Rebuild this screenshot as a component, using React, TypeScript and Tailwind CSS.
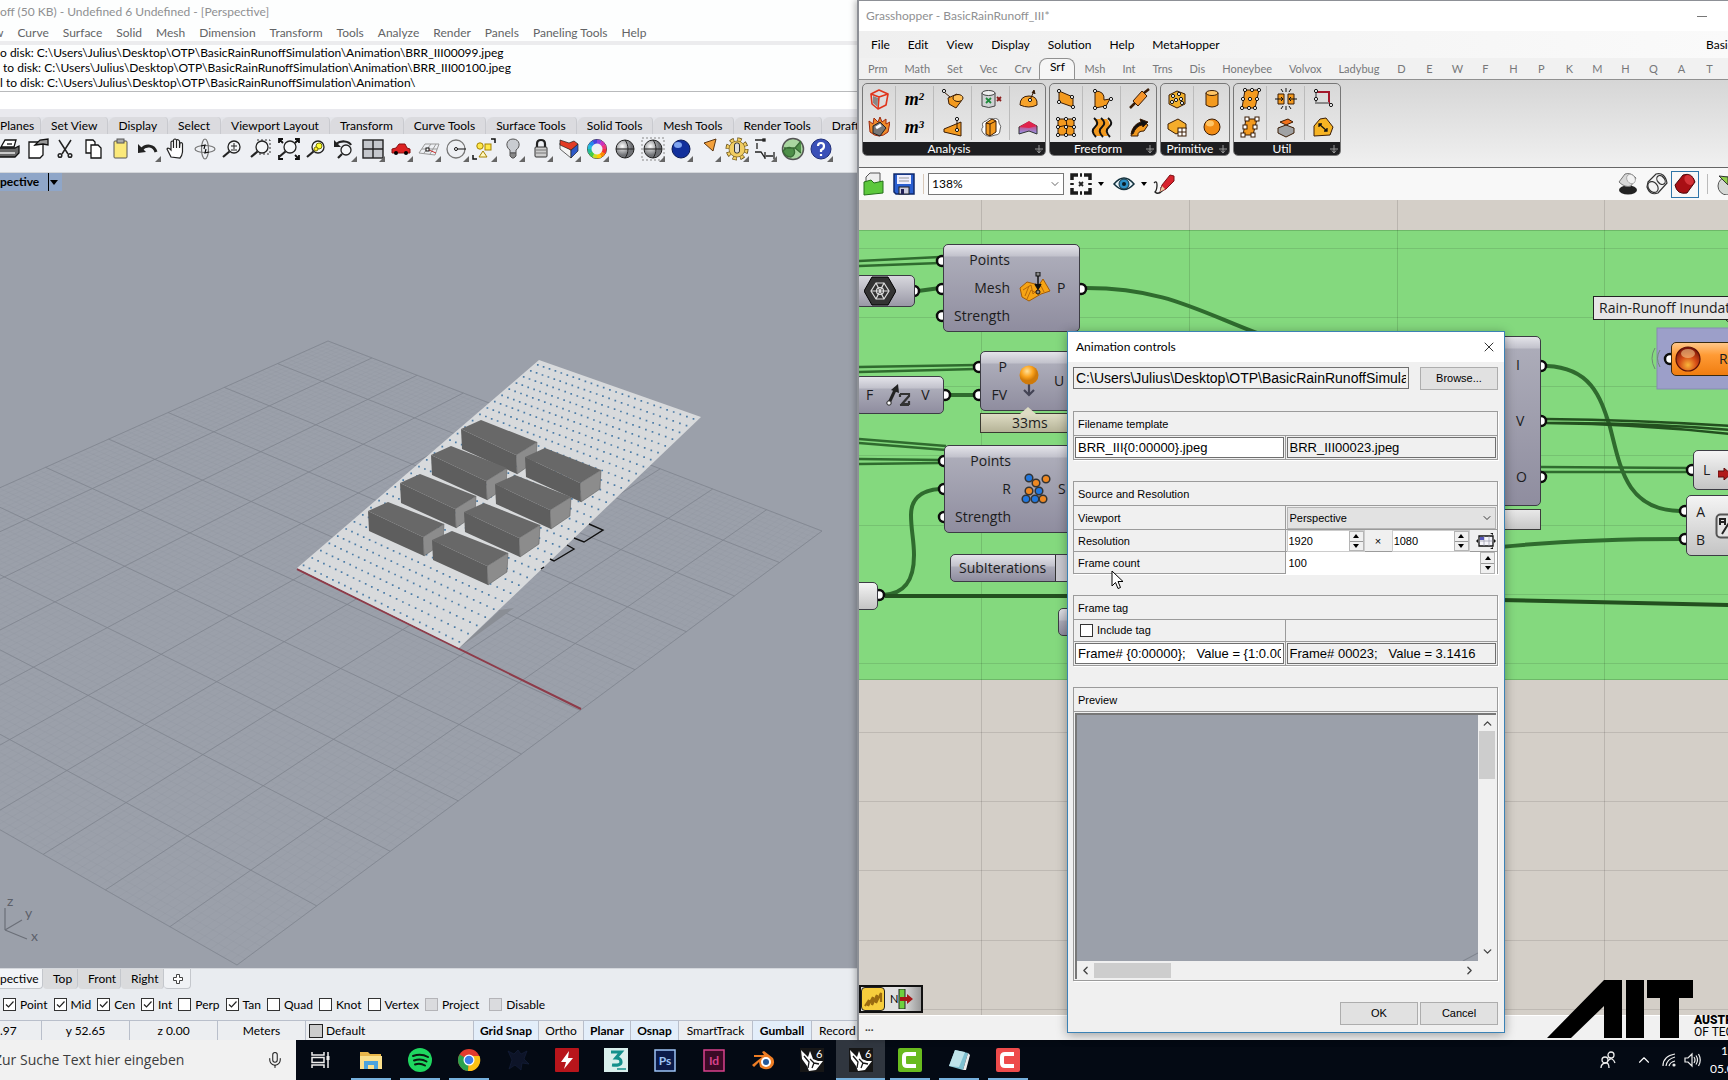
import type { ReactNode } from "react";
import { Mic, ChevronUp, ChevronDown, ChevronLeft, ChevronRight, X } from "lucide-react";

/* ---------- perspective helpers for the 3D viewport ---------- */

type Pt = [number, number];

/** Maps the unit square onto the quad a(0,0) b(1,0) c(1,1) d(0,1). */
function quadMap(a: Pt, b: Pt, c: Pt, d: Pt) {
  const dx1 = b[0] - c[0], dx2 = d[0] - c[0], sx = a[0] - b[0] + c[0] - d[0];
  const dy1 = b[1] - c[1], dy2 = d[1] - c[1], sy = a[1] - b[1] + c[1] - d[1];
  const det = dx1 * dy2 - dx2 * dy1;
  const g = (sx * dy2 - dx2 * sy) / det;
  const h = (dx1 * sy - sx * dy1) / det;
  return (u: number, v: number): Pt => {
    const w = g * u + h * v + 1;
    return [
      ((b[0] - a[0] + g * b[0]) * u + (d[0] - a[0] + h * d[0]) * v + a[0]) / w,
      ((b[1] - a[1] + g * b[1]) * u + (d[1] - a[1] + h * d[1]) * v + a[1]) / w,
    ];
  };
}

const ground = quadMap([328, 168], [822, 358], [237, 792], [-336, 465]);
const slab = quadMap([539, 188], [701, 244], [459, 475], [297, 395]);

function gridPath(n: number) {
  let d = "";
  for (let i = 0; i <= n; i++) {
    const t = i / n;
    for (const [p, q] of [[ground(t, 0), ground(t, 1)], [ground(0, t), ground(1, t)]]) {
      d += `M${p[0].toFixed(1)} ${p[1].toFixed(1)}L${q[0].toFixed(1)} ${q[1].toFixed(1)}`;
    }
  }
  return d;
}

function dotPath() {
  let d = "";
  for (let i = 0; i < 26; i++)
    for (let j = 0; j < 31; j++) {
      const [x, y] = slab((i + 0.4) / 26, (j + 0.5) / 31);
      d += `M${x.toFixed(1)} ${y.toFixed(1)}h0`;
    }
  return d;
}

const BOXES: Pt[] = [
  [461, 256], [525, 284], [431, 282], [495, 311], [400, 310], [464, 339], [368, 338], [432, 367],
];

function Scene() {
  return (
    <svg className="absolute inset-0 h-full w-full" aria-label="Perspective view of the terrain model">
      <path d={gridPath(100)} stroke="#8b909a" strokeOpacity=".28" strokeWidth=".7" fill="none" />
      <path d={gridPath(10)} stroke="#7f848e" strokeOpacity=".8" strokeWidth="1" fill="none" />
      <path d="M297 396L581 536" stroke="#8e3b49" strokeWidth="2" />
      <path d="M459 475L500 437L514 435Z" fill="#8a8e95" />
      <path d="M539 187L701 244L459 475L297 395Z" fill="#d8dadc" />
      <path d={dotPath()} stroke="#4c7ca6" strokeWidth="1.700" strokeLinecap="square" fill="none" />
      <path d="M589 351L603 357L584 369L574 365M567 372L574 376L554 388L550 386M544 394L541 396" stroke="#111" strokeWidth="1.4" fill="none" />
      {BOXES.map(([x, y], i) => (
        <g key={i} transform={`translate(${x} ${y})`}>
          <path d="M0 0L20 -9L76 13L55 26Z" fill="#686868" />
          <path d="M0 0L55 26L56 45L1 20Z" fill="#5e5e5e" />
          <path d="M55 26L76 13L75 32L56 45Z" fill="#8c8c8c" stroke="#555" strokeWidth=".5" />
        </g>
      ))}
      <g stroke="#6b6f78" strokeWidth="1.2" fill="none">
        <path d="M5 757V735M5 757L22 747M5 757L27 766" />
      </g>
      <g fill="#5d616a" fontFamily="Lato, sans-serif" fontSize="14">
        <text x="7" y="733">z</text>
        <text x="25" y="745">y</text>
        <text x="31" y="768">x</text>
      </g>
    </svg>
  );
}

/* ---------- Rhino toolbar ---------- */

const HUES = ["#e33", "#f80", "#fc0", "#cd2", "#4c4", "#2b9", "#2bd", "#28e", "#44d", "#84d", "#c3b", "#e37"];

function ringSegment(i: number) {
  const a = (i * Math.PI) / 6, b = a + Math.PI / 6 + 0.03;
  const p = (t: number) => `${(14 + 7.5 * Math.cos(t)).toFixed(2)} ${(14 + 7.5 * Math.sin(t)).toFixed(2)}`;
  return `M${p(a)}A7.5 7.5 0 0 1 ${p(b)}`;
}

const lens = <><circle cx="15" cy="12" r="6" fill="#f4f6f8" stroke="#222" strokeWidth="1.3" /><path d="M10.500 16.500L4 22" stroke="#222" strokeWidth="2.200" /></>;
const globe = <><circle cx="14" cy="14" r="9" fill="url(#ball)" stroke="#222" /><path d="M5 14H23M14 5C18 10 18 18 14 23" stroke="#222" fill="none" /></>;

const RHINO_TOOLS: { name: string; fly?: boolean; art: ReactNode }[] = [
  { name: "Print", art: <g stroke="#111" strokeWidth="1.3"><path d="M6 12L10 5H21L19 12Z" fill="#fff" /><path d="M3 13H20L24 11V18L20 22H3Z" fill="#666" /><path d="M4 18H20" stroke="#fff" /><path d="M12 9h5" /></g> },
  { name: "Document properties", art: <g stroke="#111" strokeWidth="1.3"><path d="M6 7H20V20L17 23H6Z" fill="#fff" /><path d="M12 10L17 5L25 4V10L20 9Z" fill="#999" /></g> },
  { name: "Cut", art: <g stroke="#222" strokeWidth="1.5" fill="none"><path d="M8 5L17 19M20 5L11 19" /><circle cx="9" cy="20.500" r="1.800" /><circle cx="19" cy="20.500" r="1.800" /></g> },
  { name: "Copy", art: <g stroke="#111" strokeWidth="1.3" fill="#fff"><path d="M7 5H14L16 7V18H7Z" /><path d="M12 10H19L22 13V23H12Z" /></g> },
  { name: "Paste", art: <g stroke="#555"><rect x="7" y="6" width="13" height="17" rx="1" fill="#fbe97a" /><rect x="10" y="4" width="7" height="4" fill="#aaa" /></g> },
  { name: "Undo", fly: true, art: <><path d="M6 15C11 9 19 10 21 17" stroke="#222" strokeWidth="3" fill="none" /><path d="M3 9V18L11 17Z" fill="#222" /></> },
  { name: "Pan", art: <path d="M8 22L4 14Q5 12 8 15V7Q9.500 5 10.500 7V13V5Q12 3 13.500 5V13V5Q15 4 16.500 6V13L17 8Q19 7 19.500 9V17Q19 21 17 23Z" fill="#fff" stroke="#222" strokeWidth="1.200" /> },
  { name: "Rotate view", art: <g stroke="#777" strokeWidth="1.200" fill="none"><ellipse cx="14" cy="14" rx="10" ry="3.500" /><ellipse cx="14" cy="14" rx="3.500" ry="10" /><path d="M10 11L14 10L13 14M18 17L14 18L15 14" stroke="#111" /></g> },
  { name: "Zoom dynamic", art: <>{lens}<path d="M12 11H18M15 8V14M12 15h6" stroke="#222" /></> },
  { name: "Zoom window", art: <><path d="M10 5H23V19H10" stroke="#333" strokeDasharray="2 2" fill="none" />{lens}</> },
  { name: "Zoom extents", art: <><path d="M4 8V4H8M4 4L8 8M20 4H24V8M24 4L20 8M24 20V24H20M24 24L20 20M8 24H4V20" stroke="#111" strokeWidth="1.800" fill="none" />{lens}</> },
  { name: "Zoom selected", art: <>{lens}<circle cx="16" cy="11" r="3" fill="#ff3" stroke="#770" /><circle cx="13" cy="14" r="2" fill="#fe3" stroke="#770" /></> },
  { name: "Undo view change", fly: true, art: <><circle cx="15" cy="15" r="5" fill="#f4f6f8" stroke="#222" strokeWidth="1.300" /><path d="M11 19L7 23M5 9C10 5 18 6 20 10" stroke="#222" strokeWidth="2.200" fill="none" /><path d="M3 5V12H10Z" fill="#222" /></> },
  { name: "4 viewports", fly: true, art: <g stroke="#222" strokeWidth="1.400" fill="#c4c7cc"><rect x="4" y="5" width="20" height="18" /><path d="M14 5V23M4 14H24" /></g> },
  { name: "Named views", fly: true, art: <><path d="M5 14L9 13L12 9H18L20 13L23 14V18H5Z" fill="#d22" stroke="#811" /><circle cx="9" cy="18" r="2" /><circle cx="19" cy="18" r="2" /></> },
  { name: "Set CPlane", fly: true, art: <g stroke="#999" fill="none"><path d="M4 18L10 9H24L20 20ZM7 14H22M9 18L16 9M15 19L21 9" /><path d="M14 15L21 18" stroke="#c33" /><rect x="11" y="13" width="3" height="3" stroke="#111" fill="#fff" /></g> },
  { name: "Object snap", fly: true, art: <g stroke="#777" fill="none"><circle cx="13" cy="14" r="9" strokeWidth="1.300" /><path d="M13 14H23" stroke="#111" /><circle cx="13" cy="14" r="1.500" fill="#fff" stroke="#111" /></g> },
  { name: "Select objects", fly: true, art: <g stroke="#a58200" fill="#ffe84a"><circle cx="9" cy="11" r="3.200" /><rect x="14" y="9" width="6" height="6" /><path d="M8 22L12 16L16 22Z" fill="#fff7c0" /><path d="M20 4H24V8M2 20V24H6" stroke="#111" fill="none" strokeWidth="1.500" /></g> },
  { name: "Hide objects", fly: true, art: <g stroke="#555"><path d="M14 4C7 4 6 12 11 15V18H17V15C22 12 21 4 14 4Z" fill="#c9ccd1" /><path d="M11 18H17V21L15 23H13L11 21Z" fill="#888" /></g> },
  { name: "Lock objects", fly: true, art: <><path d="M10 13V9Q10 5 14 5T18 9V13" stroke="#222" strokeWidth="2.200" fill="none" /><rect x="8" y="12" width="12" height="10" rx="1" fill="#ccc" stroke="#333" /><path d="M9 15H19M9 18H19" stroke="#777" /></> },
  { name: "Layers", fly: true, art: <g stroke="#222" strokeWidth=".7"><path d="M5 8V14L16 23V15Z" fill="#f4f4f4" /><path d="M16 15L23 9V16L16 23Z" fill="#2c58c8" /><path d="M5 5L14 8L19 6L23 9L16 15L5 10Z" fill="#e23b25" /></g> },
  { name: "Object properties", fly: true, art: <g fill="none" strokeWidth="4"><circle cx="14" cy="14" r="9.500" stroke="#333" strokeWidth="1" />{HUES.map((c, i) => <path key={c} d={ringSegment(i)} stroke={c} />)}</g> },
  { name: "Shade", art: globe },
  { name: "Shade selected", fly: true, art: <><rect x="3" y="3" width="22" height="22" fill="none" stroke="#888" strokeDasharray="2 2" />{globe}</> },
  { name: "Render", fly: true, art: <><circle cx="14" cy="14" r="9" fill="#12309c" stroke="#0a1a55" /><ellipse cx="11" cy="10" rx="4" ry="3" fill="#7fa4f0" /></> },
  { name: "Spotlight", fly: true, art: <path d="M9 8L21 4L18 16Z" fill="#f3a13c" stroke="#5b3510" /> },
  { name: "Options", fly: true, art: <><circle cx="14" cy="14" r="9" fill="none" stroke="#5d4710" strokeWidth="5" strokeDasharray="4 3.070" /><circle cx="14" cy="14" r="9" fill="none" stroke="#f1cd62" strokeWidth="3.500" strokeDasharray="3 4.070" strokeDashoffset="-.5" /><circle cx="14" cy="14" r="8" fill="#f1cd62" stroke="#5d4710" strokeWidth=".6" /><rect x="11.500" y="8" width="5" height="10" rx="2" fill="#ddd" stroke="#333" /></> },
  { name: "Dimension", fly: true, art: <g stroke="#222" strokeWidth="1.300" fill="none"><path d="M4 5H14M6 8V14M4 17H10L14 23M14 17V24M23 17V24M15 21H22" /><rect x="12" y="4" width="2" height="2" /></g> },
  { name: "Grasshopper", art: <><circle cx="14" cy="14" r="10.500" fill="#a9d6a0" stroke="#555" strokeWidth="1.500" /><path d="M22 6L16 13L22 18M16 13L5 13M4 16Q9 10 15 14Q17 20 12 22Q6 22 4 16Z" stroke="#386b35" fill="#4e8f49" strokeWidth="1.300" /></> },
  { name: "Help", fly: true, art: <><circle cx="14" cy="14" r="10" fill="#3a50b8" stroke="#1f2d78" /><path d="M11 11Q11 8 14 8T17 11T14 15V17M14 19V21" stroke="#fff" strokeWidth="2.200" fill="none" /></> },
];

const RHINO_TABS = ["Set View", "Display", "Select", "Viewport Layout", "Transform", "Curve Tools", "Surface Tools", "Solid Tools", "Mesh Tools", "Render Tools", "Drafting"];
const RHINO_MENU = ["Curve", "Surface", "Solid", "Mesh", "Dimension", "Transform", "Tools", "Analyze", "Render", "Panels", "Paneling Tools", "Help"];

function Snap({ label, on, off }: { label: string; on?: boolean; off?: boolean }) {
  return (
    <label className={off ? "flex items-center gap-1 last:pl-1" : "flex items-center gap-1"}>
      <span className="relative flex size-[13px]">
        <input type="checkbox" defaultChecked={on} disabled={off} className="peer size-[13px] appearance-none border border-[#333] bg-white disabled:border-[#b4b4b8] disabled:bg-[#dadbde]" />
        <svg viewBox="0 0 13 13" className="pointer-events-none absolute inset-0 hidden peer-checked:block"><path d="M3 6.500L5.500 9L10.500 3.500" stroke="#222" strokeWidth="1.200" fill="none" /></svg>
      </span>
      {label}
    </label>
  );
}

function Rhino() {
  return (
    <section className="flex min-w-0 flex-col overflow-hidden whitespace-nowrap bg-[#fdfefe] font-['Lato',sans-serif] text-xs text-black">
      <h1 className="h-[22px] text-[#8f9092] leading-6">off (50 KB) - Undefined 6 Undefined - [Perspective]</h1>
      <nav className="-ml-[6px] flex h-[19px] items-center gap-[14px] pt-[2px] text-[#636466] leading-4">
        <button>w</button>
        {RHINO_MENU.map((m) => <button key={m}>{m}</button>)}
      </nav>
      <div className="border-t-4 border-[#ececee] pb-px leading-[15px]">
        <p>o disk: C:\Users\Julius\Desktop\OTP\BasicRainRunoffSimulation\Animation\BRR_III00099.jpeg</p>
        <p>&nbsp;to disk: C:\Users\Julius\Desktop\OTP\BasicRainRunoffSimulation\Animation\BRR_III00100.jpeg</p>
        <p>l to disk: C:\Users\Julius\Desktop\OTP\BasicRainRunoffSimulation\Animation\</p>
      </div>
      <input aria-label="Command" className="h-[18px] border-t border-[#b9babc] bg-white outline-none" />
      <div className="flex border-t-[8px] border-[#e9e9ee] bg-[#e4e5ea]">
        <button className="h-[17px] w-[41px] shrink-0 rounded-tr border-r border-[#c9cacf] bg-[#dbdbdf] text-left leading-[17px]">Planes</button>
        {RHINO_TABS.map((t) => (
          <button key={t} className="h-[17px] rounded-tl-lg rounded-tr border-r border-[#c9cacf] bg-[#dbdbdf] px-[10px] leading-[17px]">{t}</button>
        ))}
      </div>
      <div className="-ml-[5px] flex h-[39px] border-b border-[#d3d6da] bg-[#eef0f4]">
        {RHINO_TOOLS.map((t) => (
          <button key={t.name} aria-label={t.name} className="h-[30px] w-7 shrink-0">
            <svg viewBox="0 0 28 28" className="size-7">
              {t.art}
              {t.fly && <path d="M26 21V27H20Z" fill="#666" />}
            </svg>
          </button>
        ))}
      </div>
      <div className="relative flex-1 overflow-hidden bg-[#9ba0aa]">
        <Scene />
        <div className="relative flex h-[18px] w-[62px] items-center bg-[#8fa6c8] font-bold leading-[18px]">
          <span className="w-[49px] border-r border-black">pective</span>
          <button aria-label="Viewport menu" className="pl-px"><svg viewBox="0 0 8 5" className="h-[5px] w-2"><path d="M0 0H8L4 5Z" /></svg></button>
        </div>
      </div>
      <div className="flex h-[21px] border-t border-[#d4d7dc] bg-[#e9ecf0] leading-5">
        <button className="w-[43px] rounded-br border-r border-b border-[#c4c7cc] bg-[#f2f4f7] text-left">pective</button>
        <button className="w-[35px] rounded-b border-r border-[#c4c7cc] bg-[#dadbdd] pl-[10px] text-left">Top</button>
        <button className="w-[43px] rounded-b border-r border-[#c4c7cc] bg-[#dadbdd] pl-[10px] text-left">Front</button>
        <button className="w-[43px] rounded-b border-r border-[#c4c7cc] bg-[#dadbdd] pl-[10px] text-left">Right</button>
        <button aria-label="New layout" className="rounded-b border-r border-b border-[#c4c7cc] bg-[#f0f2f5] pr-[7px] pl-[9px]">
          <svg viewBox="0 0 10 10" className="size-[10px]"><path d="M3.500 .5H6.500V3.500H9.500V6.500H6.500V9.500H3.500V6.500H.5V3.500H3.500Z" fill="#fff" stroke="#444" /></svg>
        </button>
      </div>
      <div className="flex h-[31px] items-center gap-[6px] bg-[#e9ecf0] pl-[3px]">
        <Snap label="Point" on /><Snap label="Mid" on /><Snap label="Cen" on /><Snap label="Int" on /><Snap label="Perp" />
        <Snap label="Tan" on /><Snap label="Quad" /><Snap label="Knot" /><Snap label="Vertex" />
        <Snap label="Project" off /><Snap label="Disable" off />
      </div>
      <div className="flex h-5 divide-x divide-[#b9bfcb] border-t border-[#b9bfcb] bg-[#eceef1] leading-[19px]">
        <span className="w-[42px] shrink-0">.97</span>
        <span className="w-[88px] shrink-0 text-center">y 52.65</span>
        <span className="w-[88px] shrink-0 text-center">z 0.00</span>
        <button className="w-[88px] shrink-0">Meters</button>
        <button className="flex w-[168px] shrink-0 items-center gap-[3px] pl-[3px]"><i className="size-[14px] border border-[#222] bg-[#ccc]" />Default</button>
        <button className="w-[65px] shrink-0 bg-[#e3eefa] font-bold">Grid Snap</button>
        <button className="w-[45px] shrink-0">Ortho</button>
        <button className="w-[47px] shrink-0 bg-[#e3eefa] font-bold">Planar</button>
        <button className="w-[48px] shrink-0 bg-[#e3eefa] font-bold">Osnap</button>
        <button className="w-[74px] shrink-0">SmartTrack</button>
        <button className="w-[59px] shrink-0 bg-[#e3eefa] font-bold">Gumball</button>
        <button className="shrink-0 pl-[7px]">Record</button>
      </div>
    </section>
  );
}

/* ---------- Grasshopper ribbon ---------- */

const ink = { stroke: "#3a1c05", strokeWidth: 1 };
const Knob = ({ at }: { at: Pt[] }) => <>{at.map(([x, y]) => <circle key={`${x}-${y}`} cx={x} cy={y} r="1.600" fill="#fff" stroke="#111" />)}</>;

const G: Record<string, ReactNode> = {
  box: <g stroke="#e0351c" strokeWidth="1.600" strokeLinejoin="round"><path d="M3 6L11 2L20 6L18 17L10 21L4 16Z" fill="#ddd" /><path d="M3 6L11 9L20 6M11 9L10 21" fill="none" /><path d="M5 8L10 10L9.500 19L5 15Z" fill="#888" stroke="none" /></g>,
  flame: <><path d="M2 16L1 5L5 8L6 2L10 6L12 1L14 6L18 3L18 8L22 6L20 16Q11 24 2 16Z" fill="#ef8a2b" stroke="#9c2a10" /><path d="M5 10L12 6L18 12L12 20L5 17Z" fill="#777" stroke="#222" /><path d="M8 12L13 9" stroke="#fff" strokeWidth="3" /></>,
  plug: <g {...ink}><path d="M6 10L15 6L20 12L14 20L7 16Z" fill="#f39a1f" /><ellipse cx="16" cy="10" rx="5" ry="3.500" fill="#ffbf55" /><path d="M2 4L8 9" /><Knob at={[[2, 3]]} /></g>,
  cone: <g {...ink}><path d="M2 13L19 6V20L2 16Z" fill="#f39a1f" /><path d="M15 3V15M13 14H17" /><Knob at={[[15, 3], [15, 14]]} /></g>,
  cyl: <><path d="M2 5V18Q9 21 15 18V5" fill="#cfd1d3" stroke="#444" /><ellipse cx="8.500" cy="5" rx="6.500" ry="2.500" fill="#eee" stroke="#444" /><path d="M6 10L11 15M11 10L6 15" stroke="#1c8a3a" strokeWidth="1.800" /><path d="M17 9L21 13M21 9L17 13" stroke="#8b1a1a" strokeWidth="1.800" /></>,
  cloud: <><path d="M4 18Q0 14 3 11Q1 6 6 5Q9 1 13 3Q19 1 19 7Q22 10 20 14Q20 19 15 19Q8 22 4 18Z" fill="#fff" stroke="#666" /><path d="M6 7L12 3L16 5V16L10 20L6 18Z" fill="#f39a1f" {...ink} /><path d="M10 8V20M10 8L16 5M10 8L6 7" {...ink} fill="none" /></>,
  dome: <g {...ink}><path d="M3 17Q3 8 12 8T20 17Q12 21 3 17Z" fill="#f7a32a" /><path d="M13 12L17 3M15 5L17 2L18 6" /><Knob at={[[13, 12]]} /></g>,
  ridge: <><path d="M2 11L12 6L20 10V18L12 15L2 18Z" fill="url(#heat)" stroke="#333" /><path d="M2 11L12 5L20 10L12 12Z" fill="#e0244e" /></>,
  srf4: <g {...ink}><path d="M4 3L18 9L18 19L4 14Z" fill="#f39a1f" /><Knob at={[[4, 3], [17, 9], [18, 19], [4, 14]]} /></g>,
  net: <g {...ink}><path d="M3 3H19V19H3Z" fill="#f39a1f" /><path d="M3 11Q10 8 19 11M11 3Q13 11 11 19" fill="none" /><Knob at={[[3, 3], [11, 3], [19, 3], [3, 11], [19, 11], [3, 19], [11, 19], [19, 19], [11, 11]]} /></g>,
  edge: <g {...ink}><path d="M4 3Q14 3 13 12L19 11L15 18L4 20Z" fill="#f39a1f" /><Knob at={[[4, 3], [20, 11], [4, 20], [14, 19]]} /></g>,
  loft: <g><path d="M3 3Q7 8 3 12T4 20H17Q13 15 17 12T16 3Z" fill="#f39a1f" /><path d="M3 2Q9 7 4 11T5 21M10 2Q16 7 11 11T12 21M17 2Q23 7 18 11T19 21" fill="none" stroke="#111" strokeWidth="2" /></g>,
  pipe: <g {...ink}><path d="M5 13L14 3L19 8L10 18Z" fill="#f6952a" /><path d="M2 20L7 15M16 5L21 1" strokeWidth="2.500" /></g>,
  sweep: <g {...ink}><path d="M3 20Q4 9 14 8L14 5L20 9L16 15Q9 15 10 20Z" fill="#f39a1f" /><path d="M3 18Q5 8 13 6L12 3L20 6L15 11L14 9Q8 10 5 18Z" fill="#111" /></g>,
  dice: <g {...ink}><path d="M3 7L11 3L19 6V16L11 20L3 16Z" fill="#f2b02a" /><Knob at={[[7, 8], [13, 6], [6, 14], [10, 12], [15, 11], [16, 15]]} /></g>,
  sheet: <g {...ink}><path d="M2 8L12 3L20 8V13L10 18L2 13Z" fill="#f4ad2b" /><rect x="12" y="12" width="8" height="8" fill="#fff" /><path d="M12 16H20M16 12V20" /></g>,
  can: <g {...ink}><path d="M5 5V17Q11 21 17 17V5Z" fill="#f39a1f" /><ellipse cx="11" cy="5" rx="6" ry="2.500" fill="#ffc566" /></g>,
  ball: <><circle cx="11" cy="11" r="8" fill="#f28c14" {...ink} /><ellipse cx="9" cy="7.500" rx="4" ry="3" fill="#ffc566" /></>,
  panel: <g {...ink}><path d="M6 2H20L16 20H3Z" fill="#f39a1f" /><Knob at={[[6, 2], [13, 2], [20, 2], [4, 11], [11, 11], [18, 11], [3, 20], [10, 20], [16, 20]]} /></g>,
  panel2: <g {...ink}><path d="M7 3H18L14 19H4Z" fill="#f39a1f" />{[[6, 1], [16, 1], [4, 9], [14, 9], [2, 17], [12, 17]].map(([x, y]) => <rect key={`${x}${y}`} x={x} y={y} width="4" height="4" fill="#fff" />)}</g>,
  merge: <g {...ink}><path d="M3 6H9V16H3ZM13 6H19V16H13Z" fill="#f39a1f" /><path d="M0 11H8L6 9M8 11L6 13M22 11H14L16 9M14 11L16 13M11 0V4M6 1L8 4M16 1L14 4M11 22V18M6 21L8 18M16 21L14 18" stroke="#111" fill="none" /></g>,
  crate: <g {...ink}><path d="M3 12L11 9L19 12V17L11 21L3 17Z" fill="#a0a2a4" /><path d="M5 6L13 3L18 6L11 9Z" fill="#f2711c" /></g>,
  iso: <g fill="none"><path d="M4 4H17V16" stroke="#a3172a" strokeWidth="2" /><path d="M4 4V15H17" stroke="#888" strokeWidth="2" /><Knob at={[[4, 3], [4, 11], [19, 17]]} /></g>,
  tag: <g {...ink}><path d="M2 10L8 3L14 2L21 11L18 19L2 20Z" fill="#f7b423" /><path d="M7 8L15 15M7 11V8H10M15 12V15H12" fill="none" stroke="#111" strokeWidth="1.300" /></g>,
};

function Glyph({ id }: { id: string }) {
  if (id === "m2" || id === "m3")
    return <span className="font-['Liberation_Serif',serif] text-lg font-bold italic leading-5">m<sup className="text-[11px]">{id[1]}</sup></span>;
  return <svg viewBox="0 0 22 22" className="size-[22px]">{G[id]}</svg>;
}

const RIBBON: [string, string[][]][] = [
  ["Analysis", [["box", "flame"], ["m2", "m3"], ["plug", "cone"], ["cyl", "cloud"], ["dome", "ridge"]]],
  ["Freeform", [["srf4", "net"], ["edge", "loft"], ["pipe", "sweep"]]],
  ["Primitive", [["dice", "sheet"], ["can", "ball"]]],
  ["Util", [["panel", "panel2"], ["merge", "crate"], ["iso", "tag"]]],
];

/* ---------- Grasshopper canvas ---------- */

const WIRES = [
  "M859 261L940 257", "M859 266L940 263", "M859 367L976 365", "M859 372L976 369",
  "M859 439L946 446", "M859 443L946 450", "M859 459L940 460", "M859 464L940 463",
  "M1541 467L1688 468", "M1541 472L1688 472",
];
const THICK = [
  "M918 291L940 288", "M948 395H976", "M1086 288C1165 288 1200 312 1262 335",
  "M883 595C905 594 914 580 914 555C914 540 911 530 911 515C911 500 920 490 940 489",
  "M1547 366C1590 368 1600 395 1610 427C1620 465 1625 510 1680 511",
  "M1500 547Q1580 539 1682 539",
];
const GRIPS: Pt[] = [
  [942, 261], [942, 289], [942, 316], [914, 291], [1081, 289], [979, 367], [979, 395], [945, 395],
  [944, 461], [944, 489], [944, 517], [879, 595], [1541, 366], [1541, 421], [1541, 477], [1670, 359], [1692, 470], [1685, 511], [1685, 539],
];

function CanvasBack() {
  return (
    <svg className="absolute inset-0 h-full w-full" aria-hidden="true">
      <g transform="translate(-859 -200)">
        <rect x="859" y="230" width="900" height="450" fill="#84d97e" />
        <path d="M859 230.500H1760M859 679.500H1760" stroke="#6db868" />
        <path d="M981.500 200V1015M1189.500 200V1015M1397.500 200V1015M1604.500 200V1015" stroke="#000" strokeOpacity=".12" />
        <path d="M859 248.500h900M859 317.500h900M859 386.500h900M859 455.500h900M859 525.500h900M859 594.500h900M859 663.500h900M859 732.500h900M859 801.500h900M859 870.500h900M859 940.500h900M859 1009.500h900" stroke="#000" strokeOpacity=".1" />
        <rect x="1657" y="328" width="90" height="61" fill="#9c9fc9" stroke="#8689b3" />
        <g stroke="#2f6b2e" fill="none">
          {WIRES.map((d) => <path key={d} d={d} strokeWidth="2.500" />)}
          {THICK.map((d) => <path key={d} d={d} strokeWidth="4" />)}
        </g>
        <g stroke="#23501f" fill="none">
          <path d="M885 596H1070M1500 600L1730 605" strokeWidth="4" />
          <path d="M1545 419Q1640 420 1730 426M1545 423Q1640 424 1730 434M1545 423Q1640 422 1730 430" strokeWidth="2.500" />
        </g>
        <path d="M1660 350Q1655 358 1660 367M1655 348Q1649 358 1655 369" stroke="#6d8a74" fill="none" />
        {GRIPS.map(([x, y]) => <circle key={`${x}-${y}`} cx={x} cy={y} r="5" fill="#fff" stroke="#0c0c0c" strokeWidth="2.500" />)}
      </g>
    </svg>
  );
}

const NODE = "absolute flex rounded-[5px] border border-[#3c3c44] bg-[linear-gradient(#e4e4ea_0,#c2c2cc_11px,#acacb9_12px,#8f8d9f_100%)]";
const PALE = "absolute flex rounded-[5px] border border-[#3c3c44] bg-[linear-gradient(#f4f4f4,#c4c4c4)]";

function Ports({ names }: { names: string[] }) {
  return <div className="flex flex-col text-right leading-7">{names.map((n) => <span key={n}>{n}</span>)}</div>;
}

function Canvas() {
  return (
    <div className="relative flex-1 overflow-hidden bg-[#d4cfc8] font-['Open_Sans',sans-serif] text-sm text-[#1c1c20]">
      <CanvasBack />
      <div className="absolute top-[75px] -left-1 flex h-8 w-[60px] items-center rounded-[5px] border border-[#3c3c44] bg-[linear-gradient(#d8d8de,#9998a6)] pl-2">
        <svg viewBox="0 0 32 32" className="size-8"><path d="M8 2H24L32 16L24 30H8L0 16Z" fill="#333" stroke="#000" /><g stroke="#ddd" strokeWidth="1.200" fill="none"><path d="M12 8H20L25 16L20 24H12L7 16Z" /><circle cx="16" cy="16" r="3.500" /><path d="M12 8L20 24M7 16H25M20 8L12 24" /></g></svg>
      </div>
      <div className={`${NODE} top-[44px] left-[84px] h-[88px] w-[137px] items-center pl-[9px]`}>
        <div className="w-[57px]"><Ports names={["Points", "Mesh", "Strength"]} /></div>
        <svg viewBox="0 0 32 32" className="ml-[9px] size-8"><path d="M1 16L8 10L20 13L24 7L31 19L22 22L10 29L3 25Z" fill="#f6a414" stroke="#a35c06" /><path d="M4 18L12 13L14 22L22 14L25 20M8 27L12 18L20 23M6 24L10 14" stroke="#b8690a" fill="none" /><path d="M19 1V16M16 12L19 17L22 12" stroke="#111" strokeWidth="1.500" fill="#111" /><rect x="17" y="0" width="4" height="4" fill="#888" stroke="#111" /><circle cx="19" cy="20" r="2" fill="#888" stroke="#111" /></svg>
        <span className="ml-[6px]">P</span>
      </div>
      <div className={`${NODE} top-[176px] -left-1 h-[38px] w-[89px] items-center pl-[10px]`}>
        <span>F</span>
        <svg viewBox="0 0 26 24" className="ml-3 h-6 w-[26px]"><path d="M4 20L11 5" stroke="#222" strokeWidth="3" /><path d="M6 7L13 1L14 10Z" fill="#222" /><circle cx="4" cy="20" r="2.200" fill="#fff" stroke="#222" /><path d="M15 11H24V13L17 21H24V18M15 14V11M15 22H24" stroke="#333" strokeWidth="2.200" fill="none" /></svg>
        <span className="ml-[10px]">V</span>
      </div>
      <div className={`${NODE} top-[151px] left-[121px] h-[60px] w-[120px] items-center pl-2`}>
        <div className="w-[18px]"><Ports names={["P", "FV"]} /></div>
        <svg viewBox="0 0 22 32" className="ml-[11px] h-8 w-[22px]"><path d="M11 18V29M6 25L11 30L16 25" stroke="#445" strokeWidth="2.200" fill="none" /><circle cx="11" cy="10" r="9.500" fill="url(#amber)" /></svg>
        <span className="ml-[14px]">U</span>
      </div>
      <svg viewBox="0 0 18 7" className="absolute top-[207px] left-[160px] z-10 h-[7px] w-[18px]"><path d="M1 7L9 0L17 7Z" fill="#dedcc4" /></svg>
      <div className="absolute top-[213px] left-[121px] h-5 w-[100px] border border-[#3a3a30] bg-[linear-gradient(#dedcc4,#b5b397)] pl-[31px] leading-[18px]">33ms</div>
      <div className={`${NODE} top-[245px] left-[85px] h-[88px] w-[140px] items-center pl-2`}>
        <div className="w-[58px]"><Ports names={["Points", "R", "Strength"]} /></div>
        <svg viewBox="0 0 32 32" className="ml-[10px] size-8"><g stroke="#333" strokeWidth="1.500">{[[8, 5, 1], [25, 6, 0], [15, 10, 0], [8, 18, 0], [18, 18, 1], [5, 26, 1], [14, 26, 1], [22, 26, 0]].map(([x, y, b]) => <circle key={`${x}${y}`} cx={x} cy={y} r="3.800" fill={b ? "#2277dd" : "#ee8822"} />)}</g></svg>
        <span className="ml-[5px]">S</span>
      </div>
      <div className={`${NODE} top-[354px] left-[91px] h-7 w-[150px] items-center pl-2`}>
        <span className="w-[97px] border-r border-[#333] leading-[26px]">SubIterations</span>
        <span className="h-full flex-1 bg-[#c9c9d0]" />
      </div>
      <div className={`${PALE} top-[382px] -left-2 h-7 w-[27px]`} />
      <div className={`${NODE} top-[408px] left-[199px] h-7 w-10`} />
      <div className={`${NODE} top-[136px] left-[500px] h-[170px] w-[182px] flex-col justify-between py-[14px] pl-[156px] leading-7`}>
        <span>I</span><span>V</span><span>O</span>
      </div>
      <div className="absolute top-[309px] left-[500px] h-[21px] w-[182px] border border-[#3c3c3c] bg-[linear-gradient(#e8e8e8,#c8c8c8)]" />
      <div className="absolute top-[96px] left-[734px] h-6 w-40 whitespace-nowrap border border-[#222] bg-[#e6e6e6] pl-[5px] leading-[22px]">Rain-Runoff Inundation</div>
      <svg viewBox="0 0 10 8" className="absolute top-[119px] left-[866px] h-2 w-[10px]"><path d="M0 0L9 8" stroke="#222" /></svg>
      <div className="absolute top-[142px] left-[812px] flex h-[34px] w-28 items-center rounded-[5px] border border-[#3a2a10] bg-[linear-gradient(#ffc789_0,#ff9b35_12px,#f07d10_100%)] pl-[3px]">
        <svg viewBox="0 0 26 26" className="size-[26px]"><circle cx="13" cy="13" r="12" fill="url(#redball)" stroke="#5c1207" strokeWidth="1.200" /><ellipse cx="13" cy="7.500" rx="7" ry="4.500" fill="#f7c98a" fillOpacity=".6" /></svg>
        <span className="ml-[18px]">Run</span>
      </div>
      <div className={`${PALE} top-[250px] left-[834px] h-10 w-24 items-center pl-[9px]`}>
        L
        <svg viewBox="0 0 20 12" className="mt-2 ml-2 h-3 w-5"><path d="M0 3H6V0L13 6L6 12V9H0Z" fill="#b11a1a" stroke="#5c0a0a" /></svg>
      </div>
      <div className={`${PALE} top-[295px] left-[827px] h-[61px] w-24 items-center gap-[10px] pl-[9px]`}>
        <Ports names={["A", "B"]} />
        <svg viewBox="0 0 26 26" className="size-[26px]"><rect x="1.500" y="1.500" width="23" height="23" rx="4" fill="#e4e4e4" stroke="#555" strokeWidth="2" /><path d="M5 12V6H10V12M5 9H10M7 21L17 5" stroke="#222" strokeWidth="2" fill="none" /></svg>
      </div>
      <div className="absolute bottom-[2px] left-0 flex h-7 w-[64px] items-center border-2 border-[#111] bg-[linear-gradient(90deg,#e0e0e0_70%,#999)]">
        <button aria-label="Markov" className="flex size-6 items-center justify-center rounded border border-[#222] bg-[#f7cd3d]"><svg viewBox="0 0 20 20" className="size-5"><path d="M2 17L6 11L5 17L10 8L9 16L14 6L13 14L18 4V13" stroke="#9a6a10" strokeWidth="2.200" fill="none" /></svg></button>
        <button aria-label="Profiler" className="flex items-center pl-[5px] font-['Lato'] text-[11px] text-black">N<svg viewBox="0 0 16 20" className="h-5 w-4"><rect x="1" y="0" width="6" height="20" fill="#6ed13e" stroke="#222" /><path d="M2 8H9V5L15 10L9 15V12H2Z" fill="#a51717" /></svg></button>
      </div>
    </div>
  );
}

/* ---------- animation dialog ---------- */

function Spin() {
  return (
    <span className="flex w-[15px] shrink-0 flex-col border border-[#b5b5b5] bg-[#f0f0f0]">
      <button aria-label="Increase" className="flex flex-1 items-center justify-center border-b border-[#999]"><svg viewBox="0 0 6 4" className="h-1 w-[6px]"><path d="M0 4H6L3 0Z" /></svg></button>
      <button aria-label="Decrease" className="flex flex-1 items-center justify-center"><svg viewBox="0 0 6 4" className="h-1 w-[6px]"><path d="M0 0H6L3 4Z" /></svg></button>
    </span>
  );
}

const BOX = "border border-[#9b9b9b] shadow-[1px_1px_0_#fff]";
const FIELD = "block h-[21px] w-full min-w-0 border border-[#6f6f6f] px-[2px] text-[13px] leading-[19px] outline-none";
const BTN = "h-[23px] w-[78px] border border-[#adadad] bg-[#e1e1e1]";

function Dialog() {
  return (
    <form onSubmit={(e) => e.preventDefault()} aria-label="Animation controls" className="absolute top-[330px] left-[208px] z-20 flex w-[438px] flex-col whitespace-nowrap border border-[#3b82b5] bg-[#f0f0f0] font-['Liberation_Sans',sans-serif] text-[11px] text-black shadow-[0_2px_10px_rgba(0,0,0,0.35)]">
      <header className="flex h-[30px] items-center justify-between bg-white pr-[7px] pl-2 font-['Lato',sans-serif] text-xs">
        <h2>Animation controls</h2>
        <button aria-label="Close"><X size={16} strokeWidth={1.2} /></button>
      </header>
      <div className="flex flex-col gap-[21px] pt-[5px] pr-[6px] pb-[7px] pl-[5px]">
        <div className="flex items-start justify-between">
          <input aria-label="Folder" readOnly defaultValue="C:\Users\Julius\Desktop\OTP\BasicRainRunoffSimulation\Animation" className="h-[22px] w-[336px] border border-[#6f6f6f] bg-[#f0f0f0] px-[2px] text-sm leading-5 outline-none" />
          <button className={BTN}>Browse...</button>
        </div>
        <section className={BOX}>
          <h3 className="h-6 border-b border-[#9b9b9b] pl-1 leading-6">Filename template</h3>
          <div className="grid grid-cols-2 divide-x divide-[#9b9b9b]">
            <div className="p-px"><input aria-label="Filename template" defaultValue="BRR_III{0:00000}.jpeg" className={`${FIELD} bg-white`} /></div>
            <div className="p-px"><input aria-label="Filename example" readOnly defaultValue="BRR_III00023.jpeg" className={`${FIELD} bg-[#f0f0f0]`} /></div>
          </div>
        </section>
        <section className={`${BOX} divide-y divide-[#9b9b9b]`}>
          <h3 className="h-6 pl-1 leading-6">Source and Resolution</h3>
          <div className="grid h-6 grid-cols-2 divide-x divide-[#9b9b9b]">
            <label htmlFor="viewport" className="pl-1 leading-6">Viewport</label>
            <div className="relative p-px">
              <select id="viewport" className="block h-full w-full appearance-none border border-[#b5b5b5] bg-[#e2e2e2] pl-[2px] outline-none"><option>Perspective</option></select>
              <ChevronDown size={12} strokeWidth={1.5} className="pointer-events-none absolute top-[6px] right-1" />
            </div>
          </div>
          <div className="grid h-[22px] grid-cols-2 divide-x divide-[#9b9b9b]">
            <label htmlFor="resx" className="pl-1 leading-[22px]">Resolution</label>
            <div className="flex items-stretch justify-between pr-px pl-px">
              <span className="flex w-[78px] border border-[#ccc] bg-white"><input id="resx" defaultValue="1920" className="w-full min-w-0 pl-px outline-none" /><Spin /></span>
              <span className="self-center px-1">×</span>
              <span className="flex w-[78px] border border-[#ccc] bg-white"><input aria-label="Height" defaultValue="1080" className="w-full min-w-0 pl-px outline-none" /><Spin /></span>
              <button aria-label="Use viewport size"><svg viewBox="0 0 20 16" className="h-4 w-5"><path d="M3 3H17V13H3Z" fill="#f4f4fa" stroke="#111" strokeWidth="1.300" /><path d="M3 8H17M8 3V13M13 3V13" stroke="#99a" strokeWidth=".7" /><path d="M4 4H8V7H4Z" fill="#55b" /><path d="M0 8L2 6V10ZM20 8L18 6V10ZM14 0H17V2ZM14 16H17V14Z" fill="#111" /></svg></button>
            </div>
          </div>
          <div className="grid h-[21px] grid-cols-2 divide-x divide-[#9b9b9b]">
            <label htmlFor="frames" className="pl-1 leading-[22px]">Frame count</label>
            <div className="flex bg-white pr-[2px] pl-px"><input id="frames" defaultValue="100" className="w-full min-w-0 pl-[2px] outline-none" /><Spin /></div>
          </div>
        </section>
        <section className={`${BOX} divide-y divide-[#9b9b9b]`}>
          <h3 className="h-6 pl-1 leading-6">Frame tag</h3>
          <div className="grid h-[22px] grid-cols-2 divide-x divide-[#9b9b9b]">
            <label className="flex items-center gap-1 pl-[6px]"><input type="checkbox" className="size-[13px] appearance-none border border-[#333] bg-white checked:bg-[#333]" />Include tag</label>
            <span />
          </div>
          <div className="grid grid-cols-2 divide-x divide-[#9b9b9b]">
            <div className="p-px"><input aria-label="Tag template" defaultValue="Frame# {0:00000};   Value = {1:0.0000}" className={`${FIELD} bg-white`} /></div>
            <div className="p-px"><input aria-label="Tag example" readOnly defaultValue="Frame# 00023;   Value = 3.1416" className={`${FIELD} bg-[#f0f0f0]`} /></div>
          </div>
        </section>
        <section className={BOX}>
          <h3 className="h-6 border-b border-[#9b9b9b] pl-1 leading-6">Preview</h3>
          <div className="m-px grid h-[266px] grid-cols-[1fr_18px] grid-rows-[1fr_18px] border-t-2 border-l-2 border-[#777]">
            <svg className="h-full w-full bg-[#9ba0aa]" viewBox="0 0 400 246" preserveAspectRatio="xMaxYMax slice" aria-label="Preview image"><path d="M385 246L400 238" stroke="#7f848e" /></svg>
            <div className="flex flex-col items-center pt-[2px] pb-[3px]">
              <ChevronUp size={13} strokeWidth={2.5} color="#444" />
              <div className="mt-px h-12 w-4 bg-[#cdcdcd]" />
              <ChevronDown size={13} strokeWidth={2.5} color="#444" className="mt-auto" />
            </div>
            <div className="flex items-center px-[2px]">
              <ChevronLeft size={13} strokeWidth={2.5} color="#444" />
              <div className="ml-[2px] h-[15px] w-[77px] bg-[#cdcdcd]" />
              <ChevronRight size={13} strokeWidth={2.5} color="#444" className="ml-auto" />
            </div>
          </div>
        </section>
        <div className="flex justify-end gap-[2px]">
          <button className={BTN}>OK</button>
          <button className={BTN}>Cancel</button>
        </div>
      </div>
      <svg viewBox="0 0 13 20" className="absolute top-[238px] left-[43px] h-5 w-[13px]" aria-hidden="true"><path d="M1 1V16L4.500 12.500L7 18.500L9.500 17.500L7 11.500H12Z" fill="#fff" stroke="#000" /></svg>
    </form>
  );
}

const GH_TABS = ["Prm", "Math", "Set", "Vec", "Crv", "Srf", "Msh", "Int", "Trns", "Dis", "Honeybee", "Volvox", "Ladybug"];

function Caret() {
  return <svg viewBox="0 0 6 4" className="h-1 w-[6px]"><path d="M0 0H6L3 4Z" /></svg>;
}

function Grasshopper() {
  return (
    <section className="relative z-10 flex min-w-0 flex-col border-t border-l-2 border-[#8d9096] bg-[#f1f1f1] font-['Lato',sans-serif] text-xs whitespace-nowrap text-black shadow-[-2px_0_6px_rgba(0,0,0,0.25)]">
      <header className="flex h-[30px] items-center justify-between overflow-hidden bg-white pr-[21px] pl-[7px] text-[#8f9092]">
        <h2>Grasshopper - BasicRainRunoff_III*</h2>
        <button aria-label="Minimize" className="h-px w-[10px] bg-[#777]" />
      </header>
      <nav className="flex h-[27px] items-center overflow-hidden bg-[linear-gradient(90deg,#efefef,#fafafa)] pl-3">
        <div className="flex flex-1 gap-[18px]">
          {["File", "Edit", "View", "Display", "Solution", "Help", "MetaHopper"].map((m) => <button key={m}>{m}</button>)}
        </div>
        <span className="w-[22px]">BasicRainRunoff_III</span>
      </nav>
      <div className="flex h-[22px] items-end overflow-hidden border-b border-[#909090] text-[11px] text-[#77787a]">
        {GH_TABS.map((t) => t === "Srf"
          ? <button key={t} className="h-[21px] w-9 shrink-0 rounded-t-lg border border-b-0 border-[#909090] bg-[#f6f6f6] pb-1 text-xs leading-4 text-black">{t}</button>
          : <button key={t} className="h-5 shrink-0 pr-2 pl-[9px] leading-5">{t}</button>)}
        {"DEWFHPKMHQAT".split("").map((t, i) => <button key={i} className="h-5 w-7 shrink-0 leading-5">{t}</button>)}
      </div>
      <div className="flex h-[88px] gap-[3px] border-b border-[#666] bg-[linear-gradient(#d6d6d6,#f0f0f0)] pt-[3px] pl-[3px]">
        {RIBBON.map(([name, cols]) => (
          <div key={name} className="flex h-[73px] flex-col overflow-hidden rounded-[5px] border border-[#777] bg-[linear-gradient(#d8d8d8,#ececec)]">
            <div className="flex h-[58px] divide-x divide-[#bbb] py-[2px]">
              {cols.map((c) => (
                <div key={c[0]} className="flex w-[38px] flex-col items-center justify-between py-px first:w-[33px] last:w-[35px]">
                  {c.map((id) => <button key={id} aria-label={id} className="h-6"><Glyph id={id} /></button>)}
                </div>
              ))}
            </div>
            <div className="flex flex-1 items-center bg-[#1e1e20] pr-[2px] text-white leading-3">
              <span className="flex-1 text-center">{name}</span>
              <svg viewBox="0 0 8 8" className="size-2"><path d="M4 0V8M0 4H8M2 5.500L4 8L6 5.500" stroke="#999" fill="none" /></svg>
            </div>
          </div>
        ))}
      </div>
      <div className="flex h-8 items-center overflow-hidden bg-[#f8f8f8] pl-1">
        <button aria-label="Open"><svg viewBox="0 0 22 24" className="h-6 w-[22px]"><path d="M3 12V5L7 1H17V12" fill="#eee" stroke="#555" /><path d="M1 10L8 8L11 11L20 9V21L1 23Z" fill="#5cc83c" stroke="#25701a" /></svg></button>
        <button aria-label="Save" className="ml-2"><svg viewBox="0 0 22 22" className="size-[22px]"><path d="M1 1H21V21H3L1 19Z" fill="#2a5fd0" stroke="#112a6b" strokeWidth="1.500" /><rect x="4" y="2" width="14" height="9" fill="#eef" /><path d="M6 5h10M6 8h10" stroke="#999" /><rect x="6" y="14" width="10" height="7" fill="#ccd" stroke="#222" /><rect x="8" y="16" width="3" height="5" fill="#225" /></svg></button>
        <span className="mx-2 h-5 w-px bg-[#d8c8b8]" />
        <span className="relative -ml-1">
          <select aria-label="Zoom" className="h-[22px] w-[136px] appearance-none border border-[#777] bg-white pl-[3px] outline-none"><option>138%</option></select>
          <ChevronDown size={12} strokeWidth={1.2} className="pointer-events-none absolute top-[5px] right-[3px]" />
        </span>
        <button aria-label="Zoom extents" className="ml-[6px]"><svg viewBox="0 0 22 22" className="size-[22px]"><path d="M2 7V2H8M14 2H20V7M20 15V20H14M8 20H2V15M2 10V12M20 10V12M10 2H12M10 20H12" stroke="#1a1a1a" strokeWidth="3.500" fill="none" /><path d="M9 9L13 13M13 9L9 13" stroke="#222" strokeWidth="1.800" /></svg></button>
        <button aria-label="Zoom extents menu" className="mx-[6px]"><Caret /></button>
        <button aria-label="Preview" className="ml-[3px]"><svg viewBox="0 0 22 18" className="h-[18px] w-[22px]"><path d="M1 9Q11 -3 21 9Q11 20 1 9Z" fill="#e8f4fa" stroke="#12303c" strokeWidth="1.500" /><circle cx="11" cy="9" r="5" fill="#2d8fc4" stroke="#12303c" /><circle cx="11" cy="9" r="2" fill="#0a1a22" /></svg></button>
        <button aria-label="Preview menu" className="mx-[6px]"><Caret /></button>
        <button aria-label="Sketch"><svg viewBox="0 0 22 22" className="size-[22px]"><path d="M9 12L17 2L21 3L21 8L13 16L7 19Z" fill="#d8232c" stroke="#7b1418" /><path d="M1 10Q4 7 4 12T2 19Q5 22 9 18L8 14" stroke="#222" strokeWidth="1.300" fill="none" /><path d="M7 19L9 13L12 16Z" fill="#f0c8a0" /></svg></button>
        <div className="ml-auto flex items-center">
          <button aria-label="No preview" className="w-[29px]"><svg viewBox="0 0 22 24" className="mx-auto h-6 w-[22px]"><ellipse cx="11" cy="18" rx="9" ry="4.500" fill="#222" /><path d="M2 10L8 2Q14 0 19 6L14 14Q8 16 2 10Z" fill="#d8d8d8" stroke="#777" /><ellipse cx="14" cy="7" rx="4" ry="5" transform="rotate(-35 14 7)" fill="#f2f2f2" stroke="#999" strokeWidth=".7" /></svg></button>
          <button aria-label="Wireframe preview" className="w-[29px]"><svg viewBox="0 0 22 22" className="mx-auto size-[22px]"><g fill="#f4f4f4" stroke="#333" strokeWidth="1.200"><path d="M2 9L10 1Q19 -1 21 10L12 20Q4 23 1 14Z" /><ellipse cx="7" cy="14" rx="4.500" ry="6" transform="rotate(-40 7 14)" /><ellipse cx="15" cy="7" rx="3.500" ry="5" transform="rotate(-40 15 7)" /></g></svg></button>
          <button aria-label="Shaded preview" className="flex h-[27px] w-[28px] items-center justify-center border border-[#2f75a8]"><svg viewBox="0 0 22 22" className="size-[22px]"><path d="M1 12L9 2Q18 -1 21 9L13 20Q3 22 1 12Z" fill="#a80f14" stroke="#4d0609" /><ellipse cx="15" cy="7" rx="4" ry="5.500" transform="rotate(-38 15 7)" fill="#d33338" /></svg></button>
          <span className="mx-[8px] h-5 w-px bg-[#bbb]" />
          <svg viewBox="0 0 12 22" className="h-[22px] w-3"><circle cx="11" cy="13" r="9" fill="#d5d8d5" stroke="#555" /><path d="M3 3L12 12V4Z" fill="#8fd04a" stroke="#333" /></svg>
        </div>
      </div>
      <Canvas />
      <footer className="h-[25px] border-t border-[#fff] pl-[6px] leading-[22px] font-bold text-[#444]">...</footer>
      <div className="absolute right-0 bottom-[2px] z-10 flex items-end overflow-hidden font-['Roboto',sans-serif] text-black">
        <svg viewBox="0 0 147 58" className="h-[58px] w-[147px]" role="img" aria-label="AIT logo"><path d="M0 58L57 0H75V58H57V26L24 58ZM79 0H97V58H79ZM100 0H146V18H132V58H113V18H100Z" /></svg>
        <div className="flex w-[34px] flex-col text-xs leading-3"><strong className="font-black">AUSTRIAN</strong><span>OF TECHNOLOGY</span></div>
      </div>
      <Dialog />
    </section>
  );
}

/* ---------- Windows taskbar ---------- */

const rhinoHead = <><rect width="24" height="24" fill="#161616" /><path d="M1 2L8 9L10 3L13 11L18 13L23 13L16 22L9 23L7 18L2 11Z" fill="#fff" /><path d="M4 8L9 14L8 20M10 11L14 15L12 20M14 15L19 16" stroke="#161616" strokeWidth="1.300" fill="none" /><text x="16" y="10" fill="#fff" fontSize="11" fontFamily="Lato">6</text></>;
const camtasia = (c: string) => <><rect width="24" height="24" rx="2" fill={c} /><path d="M18 6H9Q6 6 6 9V15Q6 18 9 18H18" stroke="#fff" strokeWidth="4" fill="none" /></>;

const APPS: { name: string; run?: boolean; active?: boolean; art: ReactNode }[] = [
  { name: "Task view", art: <g stroke="#eee" strokeWidth="1.500" fill="none"><path d="M2 4V7H14V4M2 20V17H14V20M2 9.500H14V14.500H2ZM18 4V20" /><path d="M18 8V12" strokeWidth="3" /></g> },
  { name: "File Explorer", run: true, art: <><path d="M1 4H9L11 6H22V21H1Z" fill="#e8b64a" /><path d="M1 8H23V21H1Z" fill="#fbe08c" /><path d="M5 21V13H19V21H15V17H9V21Z" fill="#4ba3dd" /></> },
  { name: "Spotify", run: true, art: <><circle cx="12" cy="12" r="12" fill="#1fd760" /><path d="M5 8Q13 5 20 9M6 12.500Q13 10 18.500 13.500M7 16.500Q12 14.500 17 17.500" stroke="#0a1a10" strokeWidth="2" fill="none" strokeLinecap="round" /></> },
  { name: "Chrome", run: true, art: <><circle cx="12" cy="12" r="11" fill="#e33b2e" /><path d="M12 12L2.500 6.500A11 11 0 0 0 11 23Z" fill="#2ba24c" /><path d="M12 12L11 23A11 11 0 0 0 22.500 8H12Z" fill="#fbc116" /><circle cx="12" cy="12" r="5.500" fill="#fff" /><circle cx="12" cy="12" r="4.300" fill="#3d7de8" /></> },
  { name: "Game", art: <path d="M2 3L8 6L12 2L15 6L21 3L18 11L23 16L16 15L15 22L9 17L3 21L6 12Z" fill="#0d1428" stroke="#18223f" strokeWidth=".6" /> },
  { name: "Flash", art: <><rect width="24" height="24" rx="1" fill="#b8151b" /><path d="M14 3L6 14H11L9 21L18 10H13Z" fill="#fff" /></> },
  { name: "3ds Max", art: <><rect width="24" height="24" fill="#d9efec" /><path d="M7 4H17L12 10Q17 10 17 14T8 17" stroke="#14908c" strokeWidth="3.200" fill="none" /><path d="M13 21h9" stroke="#14908c" strokeWidth="1.500" /></> },
  { name: "Photoshop", art: <><rect x="2" y="2" width="20" height="21" fill="#0b1a48" stroke="#9dc3f5" strokeWidth="1.500" /><text x="12" y="17" textAnchor="middle" fill="#9dc3f5" fontSize="12" fontWeight="700" fontFamily="Lato">Ps</text></> },
  { name: "InDesign", art: <><rect x="2" y="2" width="20" height="21" fill="#3c0a26" stroke="#d8428c" strokeWidth="1.500" /><text x="12" y="17" textAnchor="middle" fill="#d8428c" fontSize="12" fontWeight="700" fontFamily="Lato">Id</text></> },
  { name: "Blender", art: <><path d="M1 17L11 9H3V7H13L11 4L13 3L22 10Q25 16 20 20Q14 23 9 19L8 14L3 19Z" fill="#ee7d24" /><circle cx="15" cy="14" r="5" fill="#fff" /><circle cx="15" cy="14" r="3" fill="#24599b" /></> },
  { name: "Rhino 6", art: rhinoHead },
  { name: "Rhino 6 window", run: true, active: true, art: rhinoHead },
  { name: "Camtasia", run: true, art: camtasia("#69bb1e") },
  { name: "Notepad", run: true, art: <><path d="M8 2L21 5L16 22L2 18Z" fill="#7fc0d0" /><path d="M8 2L18 4L12 19L2 18Z" fill="#bfe3ea" /><path d="M16 22L21 5L23 7L19 22Z" fill="#eee" /></> },
  { name: "Camtasia recorder", run: true, art: camtasia("#ee4b4b") },
];

function Taskbar() {
  return (
    <footer className="flex h-10 items-stretch overflow-hidden bg-[#040a14]">
      <label className="flex w-[296px] items-center overflow-hidden bg-[#f1f1f1] pr-3">
        <input aria-label="Suche" placeholder="Zur Suche Text hier eingeben" className="-ml-1.5 min-w-0 flex-1 font-['Open_Sans',sans-serif] text-sm outline-none placeholder:text-[#3c3c3c]" />
        <Mic size={18} strokeWidth={1.4} color="#222" />
      </label>
      <nav className="ml-px flex">
        {APPS.map((a) => (
          <button key={a.name} aria-label={a.name} className={a.active ? "flex w-[49px] flex-col items-center bg-[#30363f] pt-2" : "flex w-[49px] flex-col items-center pt-2"}>
            <svg viewBox="0 0 24 24" className="size-6">{a.art}</svg>
            {a.run && <i className={a.active ? "mt-auto h-[2px] w-full bg-[#76b0dc]" : "mt-auto h-[2px] w-10 bg-[#76b0dc]"} />}
          </button>
        ))}
      </nav>
      <div className="ml-auto flex items-center text-white">
        <svg viewBox="0 0 16 18" className="h-[18px] w-4"><g stroke="#eee" strokeWidth="1.300" fill="none"><circle cx="11" cy="4" r="3" /><circle cx="5" cy="9" r="3" /><path d="M1 17Q1 13 5 12T9 17M8 10Q10 7 12 8T15 12" /></g></svg>
        <ChevronUp size={18} strokeWidth={1.5} className="ml-[19px]" />
        <svg viewBox="0 0 14 14" className="ml-[9px] size-[14px]"><g stroke="#eee" strokeWidth="1.200" fill="none"><path d="M1 13Q1 3 13 1M4 13Q5 6 13 4M7 13Q8 9 13 8" /><circle cx="12" cy="12" r="1" fill="#eee" /></g></svg>
        <svg viewBox="0 0 18 16" className="ml-2 h-4 w-[18px]"><g stroke="#eee" strokeWidth="1.200" fill="none"><path d="M1 6H4L8 2V14L4 10H1ZM10 5Q12 8 10 11M12 3.500Q15 8 12 12.500M14.500 2Q18 8 14.500 14" /></g></svg>
        <time className="ml-2 flex w-[18px] flex-col overflow-hidden text-right font-['Lato',sans-serif] text-xs leading-[18px]"><span>1</span><span className="self-start whitespace-nowrap">05.06</span></time>
      </div>
    </footer>
  );
}

export default function App() {
  return (
    <div className="flex min-h-screen flex-col overflow-hidden">
      <svg className="absolute size-0" aria-hidden="true">
        <defs>
          <radialGradient id="ball" cx=".35" cy=".35"><stop offset="0" stopColor="#fff" /><stop offset="1" stopColor="#6f7175" /></radialGradient>
          <radialGradient id="amber" cx=".4" cy=".3"><stop offset="0" stopColor="#ffe09a" /><stop offset=".6" stopColor="#fba41f" /><stop offset="1" stopColor="#cf7a0a" /></radialGradient>
          <radialGradient id="redball" cx=".5" cy=".75" r=".7"><stop offset="0" stopColor="#f9b63a" /><stop offset=".5" stopColor="#d64e16" /><stop offset="1" stopColor="#7c1408" /></radialGradient>
          <linearGradient id="heat" x1="0" y1="0" x2="0" y2="1"><stop offset="0" stopColor="#e0244e" /><stop offset="1" stopColor="#8f9bf0" /></linearGradient>
        </defs>
      </svg>
      <main className="grid flex-1 grid-cols-[857fr_871fr]">
        <Rhino />
        <Grasshopper />
      </main>
      <Taskbar />
    </div>
  );
}
